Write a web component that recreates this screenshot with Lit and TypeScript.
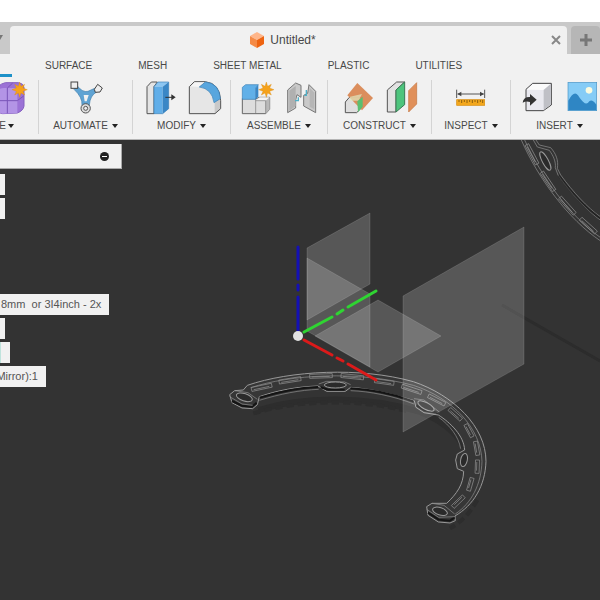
import { LitElement, html, svg, css } from "lit";
import { customElement } from "lit/decorators.js";

const sun = svg`<path fill="#f5a21b" stroke="#d98a10" stroke-width="1" d="M0-23 4-10 15-16 10-5 23 0 10 5 15 16 4 10 0 23-4 10-15 16-10 5-23 0-10-5-15-16-4-10Z"/>`;

const icons = {
  form: svg`
    <path d="M6 38Q8 14 34 8L74 8Q88 10 90 22L90 78Q88 92 70 99L26 101Q6 98 6 80Z" fill="#9b72d6" stroke="#8560c0" stroke-width="3"/>
    <path d="M8 40Q12 24 30 24L62 24Q70 26 70 40L70 99L26 101Q8 98 8 80Z" fill="#b394e6"/>
    <path d="M8 62H70L89 48M40 24V100M40 24L56 9M70 38L88 24" fill="none" stroke="#7a55b8" stroke-width="3"/>
    <g transform="translate(77 29)">${sun}</g>`,
  automate: svg`
    <path d="M28 18Q44 38 60 34L82 24 86 36Q66 46 64 76H42Q44 52 18 28Z" fill="#5fa3d3" stroke="#3f7fae" stroke-width="2"/>
    <path d="M47 45H62L56 64H50Z" fill="#f1f1f1"/>
    <rect x="9" y="6" width="20" height="19" fill="#eee" stroke="#444" stroke-width="3"/>
    <path d="M79 28 89 13 103 24 96 36 82 37Z" fill="#eee" stroke="#444" stroke-width="3"/>
    <circle cx="53" cy="85" r="14" fill="#ddd" stroke="#555" stroke-width="3"/>
    <circle cx="53" cy="85" r="6" fill="#eee" stroke="#555" stroke-width="3"/>`,
  pressPull: svg`
    <path d="M15 20 28 6H46L36 20V101H15Z" fill="#e4e4e4" stroke="#555" stroke-width="3"/>
    <path d="M36 20 48 6H80L62 20Z" fill="#8cc6f2"/>
    <path d="M36 20H62V101H36Z" fill="#61aee8"/>
    <path d="M62 20 80 6V86L62 101Z" fill="#3a87c6"/>
    <path d="M36 20 48 6H80V86L62 101H36Z" fill="none" stroke="#3a80b8" stroke-width="2"/>
    <path d="M70 52H92" stroke="#333" stroke-width="3"/><path d="M88 43 101 52 88 61Z" fill="#333"/>`,
  fillet: svg`
    <path d="M10 20 25 5H58Q102 10 104 62V86L87 101H10Z" fill="#c9c9c9" stroke="#555" stroke-width="3"/>
    <path d="M12 21H38Q78 26 86 68V99H12Z" fill="#e6e6e6"/>
    <path d="M12 20 26 7H56L38 21Z" fill="#f6f6f6"/>
    <path d="M40 21 58 6Q100 10 103 56L84 68Q78 26 40 21Z" fill="#58a6de" stroke="#3a80b8" stroke-width="2"/>`,
  component: svg`
    <path d="M10 56H50L62 52H92V88L80 101H10Z" fill="#ddd" stroke="#666" stroke-width="3"/>
    <path d="M50 62 62 52H92L80 62Z" fill="#f5f5f5"/>
    <path d="M80 62 92 52V88L80 101Z" fill="#b9b9b9"/>
    <path d="M50 56V101M50 62H80V101" fill="none" stroke="#777" stroke-width="2"/>
    <path d="M10 22 20 14H58L50 24V58H10Z" fill="#61b0e8" stroke="#3a80b8" stroke-width="2"/>
    <path d="M50 24 58 14V50L50 58Z" fill="#3a87c6"/>
    <g transform="translate(82 29)">${sun}</g>`,
  joint: svg`
    <path d="M14 30 38 9 54 16V52L42 44 38 60V84L14 98Z" fill="#c9c9c9" stroke="#777" stroke-width="3"/>
    <path d="M19 32 38 18V78L19 92Z" fill="#b0b0b0"/>
    <path d="M46 52V62H36" fill="none" stroke="#4fb0c8" stroke-width="4"/>
    <path d="M78 14 98 34V98L62 78V46L74 40Z" fill="#c9c9c9" stroke="#777" stroke-width="3"/>
    <path d="M80 24 94 38V88L80 80Z" fill="#b6b6b6"/>
    <path d="M70 30V46H64" fill="none" stroke="#4fb0c8" stroke-width="4"/>`,
  offsetPlane: svg`
    <path d="M16 66 28 52H64V84L50 98H16Z" fill="#dedede" stroke="#555" stroke-width="3"/>
    <path d="M52 9 99 54 66 91 22 46Z" fill="#d98550" opacity=".92"/>
    <path d="M30 50 66 42 56 62H30Z" fill="#dfe8c0" opacity=".7"/>
    <path d="M52 64 68 50V80L54 97Z" fill="#5abf70"/>`,
  midPlane: svg`
    <path d="M10 30 38 6H62L36 30V96H10Z" fill="#e2e2e2" stroke="#555" stroke-width="3"/>
    <path d="M36 30 62 6V74L36 96Z" fill="#4cc47c" stroke="#3a7a55" stroke-width="3"/>
    <path d="M74 32 98 8V72L74 96Z" fill="#e0905a" stroke="#c4733e" stroke-width="2"/>`,
  measure: svg`
    <path d="M11 29V54M95 29V54M14 42H92" stroke="#555" stroke-width="3"/>
    <path d="M13 42 25 35V49ZM93 42 81 35V49Z" fill="#444"/>
    <rect x="11" y="59" width="84" height="17" fill="#f3a71c" stroke="#d98c0c" stroke-width="2"/>
    <path d="M18 60V66M26 60V69M34 60V66M42 60V69M50 60V66M58 60V69M66 60V66M74 60V69M82 60V66M89 60V69" stroke="#5b3d08" stroke-width="2"/>`,
  derive: svg`
    <path d="M18 28 38 10H94V75L70 92H18Z" fill="#e9e9ef" stroke="#444" stroke-width="3"/>
    <path d="M20 29 39 12H92L70 30Z" fill="#fbfbfb"/>
    <path d="M71 30 92 12V74L71 90Z" fill="#bfc0c6"/>
    <path d="M8 68Q10 50 30 51V42L50 59 30 77V66Q18 62 8 68Z" fill="#333"/>`,
  decal: svg`
    <rect x="12" y="7" width="86" height="85" fill="#86ccf6" stroke="#4a94c4" stroke-width="2"/>
    <path d="M13 62Q30 30 42 46Q52 62 58 66Q68 76 76 64Q84 56 97 74V91H13Z" fill="#2f86c4"/>
    <circle cx="75" cy="31" r="10" fill="#fbfbe0"/>`,
};

type IconName = keyof typeof icons;

const groups: { label: string; icons: IconName[]; kind?: string }[] = [
  { label: "E", icons: ["form"], kind: "first" },
  { label: "AUTOMATE", icons: ["automate"] },
  { label: "MODIFY", icons: ["pressPull", "fillet"] },
  { label: "ASSEMBLE", icons: ["component", "joint"] },
  { label: "CONSTRUCT", icons: ["offsetPlane", "midPlane"] },
  { label: "INSPECT", icons: ["measure"] },
  { label: "INSERT", icons: ["derive", "decal"], kind: "last" },
];

const tabs = ["SURFACE", "MESH", "SHEET METAL", "PLASTIC", "UTILITIES"];

/* Slots cut in the bracket: centre x, centre y, length, angle */
const slots = [
  [125, 82, 62, -12], [210, 61, 66, -9], [303, 48, 68, -2], [397, 50, 68, 6],
  [493, 66, 58, 8], [575, 88, 62, 18], [650, 120, 56, 27], [706, 163, 48, 42],
  [747, 212, 42, 62], [770, 265, 42, 80], [772, 320, 40, 92], [751, 373, 40, 106],
  [715, 425, 46, 136],
];
const farSlots = [
  [126, 58, 66, 62], [174, 139, 66, 56], [232, 212, 66, 48], [295, 272, 62, 42],
];

const slot = ([x, y, length, angle]: number[]) => svg`
  <g transform="translate(${x} ${y}) rotate(${angle})">
    <rect class="edge" x=${-length / 2} y="-6" width=${length} height="12"/>
    <path class="edge" d="M${-length / 2 + 6} 2H${length / 2 - 8}"/>
  </g>`;

@customElement("app-ribbon")
export class AppRibbon extends LitElement {
  static styles = css`
    :host { display: block; background: #f1f1f1; border-bottom: 1px solid #b5b5b5; box-sizing: border-box; height: 86px; overflow: hidden; }
    button { font: inherit; color: inherit; background: none; border: 0; padding: 0; margin: 0; }
    .tabs { display: flex; height: 23px; }
    .tab { padding: 0 23px; white-space: nowrap; line-height: 23px; }
    .current { width: 22px; display: flex; align-items: flex-end; }
    .current .bar { width: 12px; height: 3px; background: #1d91c8; }
    .groups { display: grid; grid-template-columns: 39fr 94fr 98fr 97fr 104fr 79fr 89fr; padding-top: 3px; }
    .group { min-width: 0; display: flex; flex-direction: column; align-items: center; height: 54px; border-right: 1px solid #d4d4d4; }
    .last { border: 0; padding-left: 8px; }
    .first { align-items: flex-end; }
    .first .icons { padding-right: 8px; }
    .first .label { padding-right: 24px; gap: 2px; }
    .icons { display: flex; gap: 8px; }
    svg { width: 36px; height: 36px; display: block; }
    .label { display: flex; align-items: center; gap: 4px; line-height: 20px; white-space: nowrap; }
    .caret { width: 0; height: 0; border: 3px solid transparent; border-top: 4px solid #222; border-bottom: 0; }
  `;

  render() {
    return html`
      <nav class="tabs">
        <button class="current" aria-label="Current workspace tab"><span class="bar"></span></button>
        ${tabs.map((t) => html`<button class="tab">${t}</button>`)}
      </nav>
      <div class="groups">
        ${groups.map((g) => html`
          <div class="group ${g.kind ?? ""}">
            <div class="icons">
              ${g.icons.map((name) => html`<button aria-label=${name}><svg viewBox="0 0 108 108">${icons[name]}</svg></button>`)}
            </div>
            <button class="label">${g.label}<span class="caret"></span></button>
          </div>`)}
      </div>`;
  }
}

@customElement("model-view")
export class ModelView extends LitElement {
  static styles = css`
    :host { display: block; min-width: 0; min-height: 0; }
    svg { width: 100%; height: 100%; display: block; }
    .plane { fill: #fff; fill-opacity: 0.18; stroke: #fff; stroke-opacity: 0.13; }
    .axis { fill: none; stroke-width: 3; stroke-linecap: round; }
    .z { stroke: #1410b4; }
    .y { stroke: #2fd432; }
    .x { stroke: #dc1a1a; }
    .edge { fill: none; stroke: #929292; stroke-width: 2; }
    .dark { fill: none; stroke: #141414; stroke-width: 6; }
    .body { fill: #363636; stroke: #999; stroke-width: 3; }
    .hole { fill: #2a2a2a; stroke: #999; stroke-width: 3; }
    .shadow { fill: none; stroke: #2d2d2d; stroke-width: 18; }
    .notches { stroke-dasharray: 22 12; stroke-width: 12; }
  `;

  render() {
    return html`
      <svg viewBox="0 140 600 460" preserveAspectRatio="xMidYMid slice" role="img" aria-label="Model">
        <path d="M502 305 600 361" stroke="#2c2c2c" stroke-width="3"/>
        <g transform="translate(220 360) scale(.3333)">
          <path class="shadow" d="M115 150C250 108 440 106 600 156C670 184 710 220 732 262"/>
          <path class="shadow notches" d="M100 160C250 118 420 116 570 156M772 420Q740 478 690 505"/>
          <path class="body" d="M82 76C210 32 420 20 580 65C700 105 798 200 798 304C796 378 760 436 705 468L706 482 690 489 655 486 624 466 620 440 636 430 680 430C710 402 730 374 731 334L712 326 707 300 712 282 734 270C732 228 692 188 655 165L612 158 588 142 583 122C510 100 450 86 392 82L376 94 320 94 294 78C230 80 170 92 118 110L112 134 98 146 66 144 36 128 29 104 44 92 70 90Z"/>
          <path class="dark" d="M119 113C180 94 240 83 294 81M392 85C450 88 520 102 580 124M36 123 66 137 96 140 110 128M624 458 656 479 690 482 704 472M590 136 614 151 652 158M302 82 325 89 374 89"/>
          <path class="edge" d="M92 83C210 44 410 31 580 76C698 114 784 206 786 304C784 374 754 430 706 462M118 121C180 102 240 90 296 88M392 92C450 94 520 108 582 132M656 172C690 196 716 230 722 266M296 72 320 64 374 66 392 74M582 116 612 120 658 156M44 92 84 98 112 118M29 110 66 132 98 136M636 430 672 436 704 462M620 448 656 472 704 470"/>
          <ellipse class="hole" cx="73" cy="112" rx="25" ry="11" transform="rotate(18 73 112)"/>
          <ellipse class="hole" cx="346" cy="75" rx="33" ry="9"/>
          <ellipse class="hole" cx="618" cy="138" rx="27" ry="10" transform="rotate(28 618 138)"/>
          <ellipse class="hole" cx="732" cy="300" rx="10" ry="20" transform="rotate(12 732 300)"/>
          <ellipse class="hole" cx="660" cy="454" rx="23" ry="11" transform="rotate(18 660 454)"/>
          ${slots.map(slot)}
        </g>
        <g transform="translate(490 135) scale(.3333)">
          <path class="edge" d="M94 15C144 130 236 254 332 318M104 15C154 126 242 246 332 308M130 15 142 36 178 46C190 62 198 80 196 98L204 120C240 172 290 226 332 256M138 15 148 30 182 38C198 56 206 76 202 100L212 120C250 172 292 218 332 246"/>
          <path class="dark" d="M206 121C244 174 291 222 332 251" stroke-opacity=".5"/>
          <ellipse class="hole" cx="166" cy="78" rx="31" ry="9" transform="rotate(62 166 78)"/>
          ${farSlots.map(slot)}
        </g>
        <path class="plane" d="M307 248 370 213V284L307 320Z"/>
        <path class="plane" d="M307 258 370 294V367L307 331Z"/>
        <path class="plane" d="M378 300 441 336 378 372 315 336Z"/>
        <path class="plane" d="M403 296 524 227V364L403 432Z"/>
        <path class="axis z" d="M298 247V279M298 285V290M298 297V332"/>
        <path class="axis y" d="M304 332 332 317M337 314 343 310M348 307 376 291"/>
        <path class="axis x" d="M304 340 332 355M337 358 343 361M348 364 376 380"/>
        <circle cx="298" cy="336" r="5" fill="#e2e2e2"/>
      </svg>`;
  }
}

@customElement("browser-panel")
export class BrowserPanel extends LitElement {
  static styles = css`
    :host { display: block; padding-top: 4px; font: 11px "Liberation Sans", Arial, sans-serif; color: #555; }
    .head { box-sizing: border-box; width: 122px; height: 25px; background: #f1f1f1; display: flex; align-items: center; justify-content: flex-end; padding-right: 12px; border-right: 1px solid #aaa; border-bottom: 1px solid #aaa; }
    .collapse { width: 9px; height: 9px; border: 0; border-radius: 50%; padding: 0; background: #222; display: grid; place-items: center; }
    .dash { width: 5px; height: 1px; background: #fff; }
    .rows { list-style: none; margin: 5px 0 0; padding: 0; display: grid; grid-auto-rows: 21px; gap: 3px; justify-items: start; }
    .row { display: flex; background: #f1f1f1; line-height: 21px; white-space: pre; }
    .gap { visibility: hidden; }
    .narrow { width: 5px; }
    .wide { box-sizing: border-box; width: 10px; border-left: 1px solid #bfe3dc; }
    .size { padding: 0 8px 0 1px; }
    .mirror { padding-right: 8px; }
    .clip { display: flex; justify-content: flex-end; width: 38px; overflow: hidden; }
  `;

  render() {
    return html`
      <div class="head"><button class="collapse" aria-label="Collapse"><span class="dash"></span></button></div>
      <ul class="rows">
        <li class="row narrow"></li>
        <li class="row narrow"></li>
        <li class="row gap"></li>
        <li class="row gap"></li>
        <li class="row gap"></li>
        <li class="row size">8mm  or 3I4inch - 2x</li>
        <li class="row narrow"></li>
        <li class="row wide"></li>
        <li class="row mirror"><span class="clip">Mirror):1</span></li>
      </ul>`;
  }
}

@customElement("app-root")
export class AppRoot extends LitElement {
  static styles = css`
    :host { display: flex; flex-direction: column; min-height: 100vh; background: #fff; font: 10px "Liberation Sans", Arial, sans-serif; color: #484848; overflow: hidden; }
    button { font: inherit; color: inherit; border: 0; padding: 0; margin: 0; background: none; }
    .documents { margin-top: 22px; height: 32px; box-sizing: border-box; padding-top: 4px; background: #c9c9c9; display: flex; gap: 4px; }
    .previous { width: 6px; }
    .previous svg { width: 6px; height: 28px; display: block; }
    .document { flex: 1; position: relative; display: flex; align-items: center; justify-content: center; gap: 5px; background: #f1f1f1; border-radius: 4px 4px 0 0; font-size: 12px; line-height: 28px; }
    .cube { width: 16px; height: 16px; }
    .title { margin-right: 12px; }
    .close { position: absolute; right: 6px; top: 9px; width: 10px; height: 10px; }
    .close svg, .add svg { display: block; }
    .add { width: 29px; display: grid; place-items: center; background: #b6b6b6; border-radius: 4px 4px 0 0; }
    .workspace { flex: 1; display: grid; grid-template: minmax(0, 1fr) / minmax(0, 1fr); background: #333; min-height: 460px; }
    .layer { grid-area: 1 / 1; }
    .front { z-index: 1; justify-self: start; align-self: start; }
  `;

  render() {
    return html`
      <header class="documents">
        <button class="previous" aria-label="Document list"><svg viewBox="0 0 6 28"><path d="M0 9H3L0 14Z" fill="#777"/></svg></button>
        <div class="document">
          <svg class="cube" viewBox="0 0 16 16">
            <path d="M8 0 15 4 8 8 1 4Z" fill="#ffb68a"/><path d="M1 4 8 8V16L1 12Z" fill="#f58a45"/><path d="M15 4 8 8V16L15 12Z" fill="#ee6411"/>
          </svg>
          <span class="title">Untitled*</span>
          <button class="close" aria-label="Close"><svg width="10" height="10"><path d="M1 1 9 9M9 1 1 9" stroke="#888" stroke-width="2"/></svg></button>
        </div>
        <button class="add" aria-label="New document"><svg width="14" height="14"><path d="M7 1V13M1 7H13" stroke="#777" stroke-width="3"/></svg></button>
      </header>
      <app-ribbon></app-ribbon>
      <main class="workspace">
        <model-view class="layer"></model-view>
        <browser-panel class="layer front"></browser-panel>
      </main>`;
  }
}
